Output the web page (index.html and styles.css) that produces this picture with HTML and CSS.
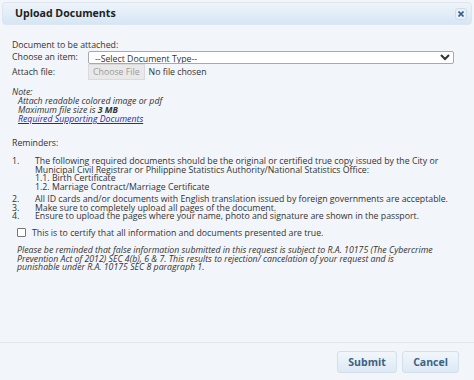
FILE: index.html
```html
<!DOCTYPE html>
<html lang="en">

<head>
    <meta charset="UTF-8">
    <meta name="viewport" content="width=device-width, initial-scale=1.0">
    <title>Upload Documents</title>
    <link rel="stylesheet" href="styles.css">
</head>

<body>

    <div class="dialog">
        <div class="titlebar">
            <span class="title">Upload Documents</span>
            <button class="close" title="Close">
                <svg width="6" height="6" viewBox="0 0 6 6"><path d="M0.5 0.5L5.5 5.5M5.5 0.5L0.5 5.5" stroke="#3a5f86" stroke-width="1.6"/></svg>
            </button>
        </div>

        <div class="content">
            <div class="field-title">Document to be attached:</div>
            <div class="field-row first">
                <label>Choose an item:</label>
                <select class="doc-select">
                    <option>--Select Document Type--</option>
                </select>
            </div>
            <div class="field-row">
                <label>Attach file:</label>
                <span class="file-btn">Choose File</span>
                <span class="file-name">No file chosen</span>
            </div>

            <div class="note">
                <div>Note:</div>
                <div class="note-body">
                    <div>Attach readable colored image or pdf</div>
                    <div>Maximum file size is <b>3 MB</b></div>
                    <div><a href="">Required Supporting Documents</a></div>
                </div>
            </div>

            <div class="reminders-title">Reminders:</div>
            <ol class="reminders">
                <li>
                    <span class="num">1.</span>
                    <div>
                        The following required documents should be the original or certified true copy issued by the City or Municipal Civil Registrar or Philippine Statistics Authority/National Statistics Office:
                        <div>1.1. Birth Certificate</div>
                        <div>1.2. Marriage Contract/Marriage Certificate</div>
                    </div>
                </li>
                <li class="gap">
                    <span class="num">2.</span>
                    <div>All ID cards and/or documents with English translation issued by foreign governments are acceptable.</div>
                </li>
                <li>
                    <span class="num">3.</span>
                    <div>Make sure to completely upload all pages of the document.</div>
                </li>
                <li>
                    <span class="num">4.</span>
                    <div>Ensure to upload the pages where your name, photo and signature are shown in the passport.</div>
                </li>
            </ol>

            <label class="certify"><span class="box"></span>This is to certify that all information and documents presented are true.</label>

            <p class="warning">Please be reminded that false information submitted in this request is subject to R.A. 10175 (The Cybercrime Prevention Act of 2012) SEC 4(b), 6 &amp; 7. This results to rejection/ cancelation of your request and is<br>punishable under R.A. 10175 SEC 8 paragraph 1.</p>
        </div>

        <div class="buttonpane">
            <button class="btn">Submit</button>
            <button class="btn">Cancel</button>
        </div>
    </div>

</body>

</html>
```

FILE: styles.css
```css
html,
body {
    margin: 0;
    padding: 0;
    height: 100%;
    background: #fbfcfd;
}

body {
    font-family: "Open Sans", "DejaVu Sans", sans-serif;
    font-size: 8.75px;
    color: #333;
}

.dialog {
    height: 380px;
    display: flex;
    flex-direction: column;
    background: #f2f5f9;
}

.titlebar {
    margin: 2px 2px 0;
    height: 21px;
    border: 1px solid #dde6ef;
    border-radius: 4px;
    background: linear-gradient(#eef4fa, #d6e6f5);
    display: flex;
    align-items: center;
    justify-content: space-between;
    padding: 0 4px 0 12px;
}

.title {
    font-size: 10.6px;
    font-weight: bold;
    color: #222;
    margin-top: -1px;
}

.close {
    width: 12px;
    height: 12px;
    padding: 0;
    border: 1px solid #cfdcea;
    border-radius: 3px;
    background: #e7f0f8;
    display: flex;
    align-items: center;
    justify-content: center;
}

.content {
    flex: 1;
    padding: 14px 12px 0;
}

.field-title {
    line-height: 12px;
}

.field-row {
    display: flex;
    align-items: center;
    height: 17px;
}

.field-row.first {
    height: 12px;
}

.field-row label {
    width: 76px;
}

.doc-select {
    width: 366px;
    height: 13px;
    padding: 0 2px;
    font: inherit;
    color: #333;
    border: 1px solid #a9a9a9;
    border-radius: 2px;
    background: #fff;
}

.file-btn {
    padding: 1px 4px;
    background: #e9e9e9;
    color: #9a9a9a;
    border: 1px solid #dadada;
}

.file-name {
    margin-left: 4px;
}

.note {
    margin-top: 8px;
    font-style: italic;
    line-height: 9px;
}

.note-body {
    padding-left: 6px;
}

.note a {
    color: #2a2aa0;
}

.reminders-title {
    margin-top: 13px;
}

.reminders {
    list-style: none;
    margin: 8px 0 0;
    padding: 0;
    line-height: 8.7px;
}

.reminders li {
    display: flex;
}

.reminders li.gap {
    margin-top: 3px;
}

.num {
    width: 23px;
    flex: none;
}

.certify {
    display: flex;
    align-items: center;
    margin: 6px 0 0 5px;
}

.box {
    width: 7px;
    height: 7px;
    border: 1px solid #777;
    border-radius: 1px;
    background: #fff;
    margin-right: 6px;
}

.warning {
    margin: 7px 4px 0 5px;
    font-style: italic;
    line-height: 8.7px;
}

.buttonpane {
    height: 37px;
    border-top: 1px solid #e2e8ef;
    display: flex;
    justify-content: flex-end;
    align-items: center;
    gap: 5px;
    padding-right: 15px;
}

.btn {
    height: 22px;
    padding: 0 10px;
    font-family: "Open Sans", "DejaVu Sans", sans-serif;
    font-size: 10.5px;
    font-weight: bold;
    color: #3b6285;
    border: 1px solid #d2dfec;
    border-radius: 3px;
    background: linear-gradient(#f1f6fb, #dde9f5);
}

.btn:first-child {
    width: 60px;
}

.btn:last-child {
    width: 57px;
}
```
